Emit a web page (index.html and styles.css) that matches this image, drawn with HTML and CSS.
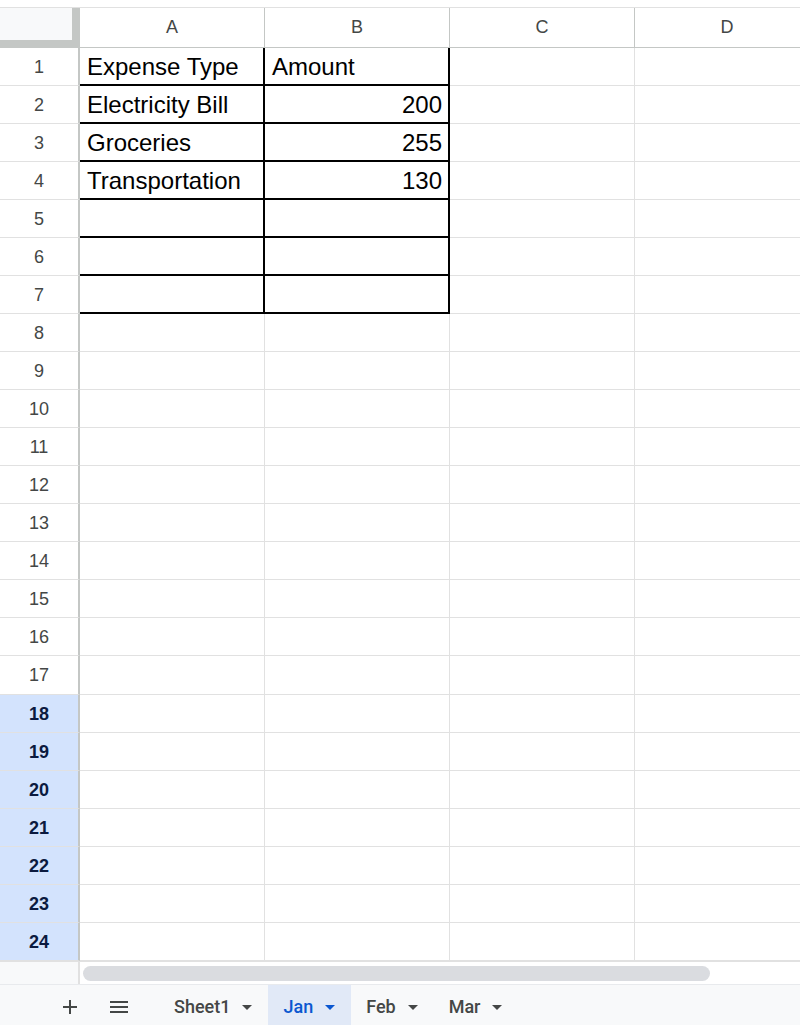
FILE: index.html
```html
<!DOCTYPE html>
<html>
<head>
<meta charset="utf-8">
<link rel="stylesheet" href="styles.css">
</head>
<body>
<div class="app">
  <div class="topstrip"></div>
  <div class="colheads">
    <div class="corner"><div class="corner-fill"></div></div>
    <div class="colhead">A</div>
    <div class="colhead">B</div>
    <div class="colhead">C</div>
    <div class="colhead">D</div>
  </div>
  <div class="grid">
    <div class="row"><div class="rh">1</div><div class="cell data">Expense Type</div><div class="cell data">Amount</div><div class="cell"></div><div class="cell"></div></div>
    <div class="row"><div class="rh">2</div><div class="cell data">Electricity Bill</div><div class="cell data num">200</div><div class="cell"></div><div class="cell"></div></div>
    <div class="row"><div class="rh">3</div><div class="cell data">Groceries</div><div class="cell data num">255</div><div class="cell"></div><div class="cell"></div></div>
    <div class="row"><div class="rh">4</div><div class="cell data">Transportation</div><div class="cell data num">130</div><div class="cell"></div><div class="cell"></div></div>
    <div class="row"><div class="rh">5</div><div class="cell data"></div><div class="cell data"></div><div class="cell"></div><div class="cell"></div></div>
    <div class="row"><div class="rh">6</div><div class="cell data"></div><div class="cell data"></div><div class="cell"></div><div class="cell"></div></div>
    <div class="row"><div class="rh">7</div><div class="cell data"></div><div class="cell data"></div><div class="cell"></div><div class="cell"></div></div>
    <div class="row"><div class="rh">8</div><div class="cell"></div><div class="cell"></div><div class="cell"></div><div class="cell"></div></div>
    <div class="row"><div class="rh">9</div><div class="cell"></div><div class="cell"></div><div class="cell"></div><div class="cell"></div></div>
    <div class="row"><div class="rh">10</div><div class="cell"></div><div class="cell"></div><div class="cell"></div><div class="cell"></div></div>
    <div class="row"><div class="rh">11</div><div class="cell"></div><div class="cell"></div><div class="cell"></div><div class="cell"></div></div>
    <div class="row"><div class="rh">12</div><div class="cell"></div><div class="cell"></div><div class="cell"></div><div class="cell"></div></div>
    <div class="row"><div class="rh">13</div><div class="cell"></div><div class="cell"></div><div class="cell"></div><div class="cell"></div></div>
    <div class="row"><div class="rh">14</div><div class="cell"></div><div class="cell"></div><div class="cell"></div><div class="cell"></div></div>
    <div class="row"><div class="rh">15</div><div class="cell"></div><div class="cell"></div><div class="cell"></div><div class="cell"></div></div>
    <div class="row"><div class="rh">16</div><div class="cell"></div><div class="cell"></div><div class="cell"></div><div class="cell"></div></div>
    <div class="row tall"><div class="rh">17</div><div class="cell"></div><div class="cell"></div><div class="cell"></div><div class="cell"></div></div>
    <div class="row"><div class="rh sel">18</div><div class="cell"></div><div class="cell"></div><div class="cell"></div><div class="cell"></div></div>
    <div class="row"><div class="rh sel">19</div><div class="cell"></div><div class="cell"></div><div class="cell"></div><div class="cell"></div></div>
    <div class="row"><div class="rh sel">20</div><div class="cell"></div><div class="cell"></div><div class="cell"></div><div class="cell"></div></div>
    <div class="row"><div class="rh sel">21</div><div class="cell"></div><div class="cell"></div><div class="cell"></div><div class="cell"></div></div>
    <div class="row"><div class="rh sel">22</div><div class="cell"></div><div class="cell"></div><div class="cell"></div><div class="cell"></div></div>
    <div class="row"><div class="rh sel">23</div><div class="cell"></div><div class="cell"></div><div class="cell"></div><div class="cell"></div></div>
    <div class="row"><div class="rh sel">24</div><div class="cell"></div><div class="cell"></div><div class="cell"></div><div class="cell"></div></div>
  </div>
  <div class="scrollband">
    <div class="scroll-left"></div>
    <div class="scroll-track"><div class="scroll-thumb"></div></div>
  </div>
  <div class="tabbar">
    <div class="iconbtn plus">
      <svg width="14" height="14" viewBox="0 0 14 14"><path d="M7 0v14M0 7h14" stroke="#444746" stroke-width="2" fill="none"/></svg>
    </div>
    <div class="iconbtn menu">
      <svg width="18" height="12" viewBox="0 0 18 12"><path d="M0 1h18M0 6h18M0 11h18" stroke="#444746" stroke-width="2" fill="none"/></svg>
    </div>
    <div class="tab"><span class="tabname">Sheet1</span><svg class="caret" width="10" height="5" viewBox="0 0 10 5"><path d="M0 0h10L5 5z" fill="#444746"/></svg></div>
    <div class="tab active"><span class="tabname">Jan</span><svg class="caret" width="10" height="5" viewBox="0 0 10 5"><path d="M0 0h10L5 5z" fill="#0b57d0"/></svg></div>
    <div class="tab"><span class="tabname">Feb</span><svg class="caret" width="10" height="5" viewBox="0 0 10 5"><path d="M0 0h10L5 5z" fill="#444746"/></svg></div>
    <div class="tab"><span class="tabname">Mar</span><svg class="caret" width="10" height="5" viewBox="0 0 10 5"><path d="M0 0h10L5 5z" fill="#444746"/></svg></div>
  </div>
</div>
</body>
</html>
```

FILE: styles.css
```css
* { box-sizing: border-box; }
html, body { margin: 0; padding: 0; background: #ffffff; }
body { font-family: "Liberation Sans", Arial, sans-serif; width: 800px; height: 1025px; overflow: hidden; }

.app { display: flex; flex-direction: column; width: 800px; height: 1025px; overflow: hidden; }

.topstrip { height: 8px; border-bottom: 1px solid #e1e1e1; flex: none; }

.colheads { display: flex; height: 40px; flex: none; }
.corner { width: 80px; height: 40px; background: #c4c7c5; flex: none; }
.corner-fill { width: 72px; height: 32px; background: #f8f9fa; }
.colhead {
  width: 185px; flex: none; height: 40px;
  border-right: 1px solid #c4c7c5; border-bottom: 1px solid #c4c7c5;
  display: flex; align-items: center; justify-content: center;
  font-size: 18px; color: #444746; padding-top: 0;
}

.grid { display: flex; flex-direction: column; flex: none; }
.row { display: flex; height: 38px; }
.row.tall { height: 39px; }
.rh {
  width: 80px; flex: none; height: 100%;
  border-right: 2px solid #c4c7c5; border-bottom: 1px solid #e1e1e1;
  display: flex; align-items: center; justify-content: center;
  font-size: 18px; color: #444746; padding-top: 1px;
}
.rh.sel { background: #d3e3fd; color: #0b1a3f; font-weight: bold; padding-top: 1px; }
.cell {
  width: 185px; flex: none; height: 100%;
  border-right: 1px solid #e1e1e1; border-bottom: 1px solid #e1e1e1;
  display: flex; align-items: center;
  font-size: 24px; color: #000000; padding: 2px 6px 0 7px; white-space: nowrap;
}
.cell.data { border-right: 2px solid #000000; border-bottom: 2px solid #000000; }
.cell.num { justify-content: flex-end; }

.scrollband { display: flex; height: 23px; flex: none; border-top: 1px solid #e1e1e1; }
.scroll-left { width: 80px; background: #f8f9fa; border-right: 2px solid #e1e1e1; flex: none; }
.scroll-track { flex: 1; padding: 4px 0 0 3px; }
.scroll-thumb { width: 627px; height: 15px; border-radius: 8px; background: #dadce0; }

.tabbar {
  flex: 1; display: flex; align-items: stretch;
  background: #f8f9fa; border-top: 1px solid #e8eaed;
  padding-left: 50px;
  font-family: Roboto, "Liberation Sans", sans-serif;
}
.iconbtn { width: 40px; display: flex; align-items: center; justify-content: center; flex: none; padding-top: 3px; }
.iconbtn.menu { margin-left: 9px; margin-right: 20px; }
.tab {
  display: flex; align-items: center;
  padding: 3px 16px 0 15px; gap: 12px;
  font-size: 18px; font-weight: 500; color: #444746;
}
.tab.active { background: #e1e9f7; color: #0b57d0; }
.caret { flex: none; margin-top: 1px; }
```
